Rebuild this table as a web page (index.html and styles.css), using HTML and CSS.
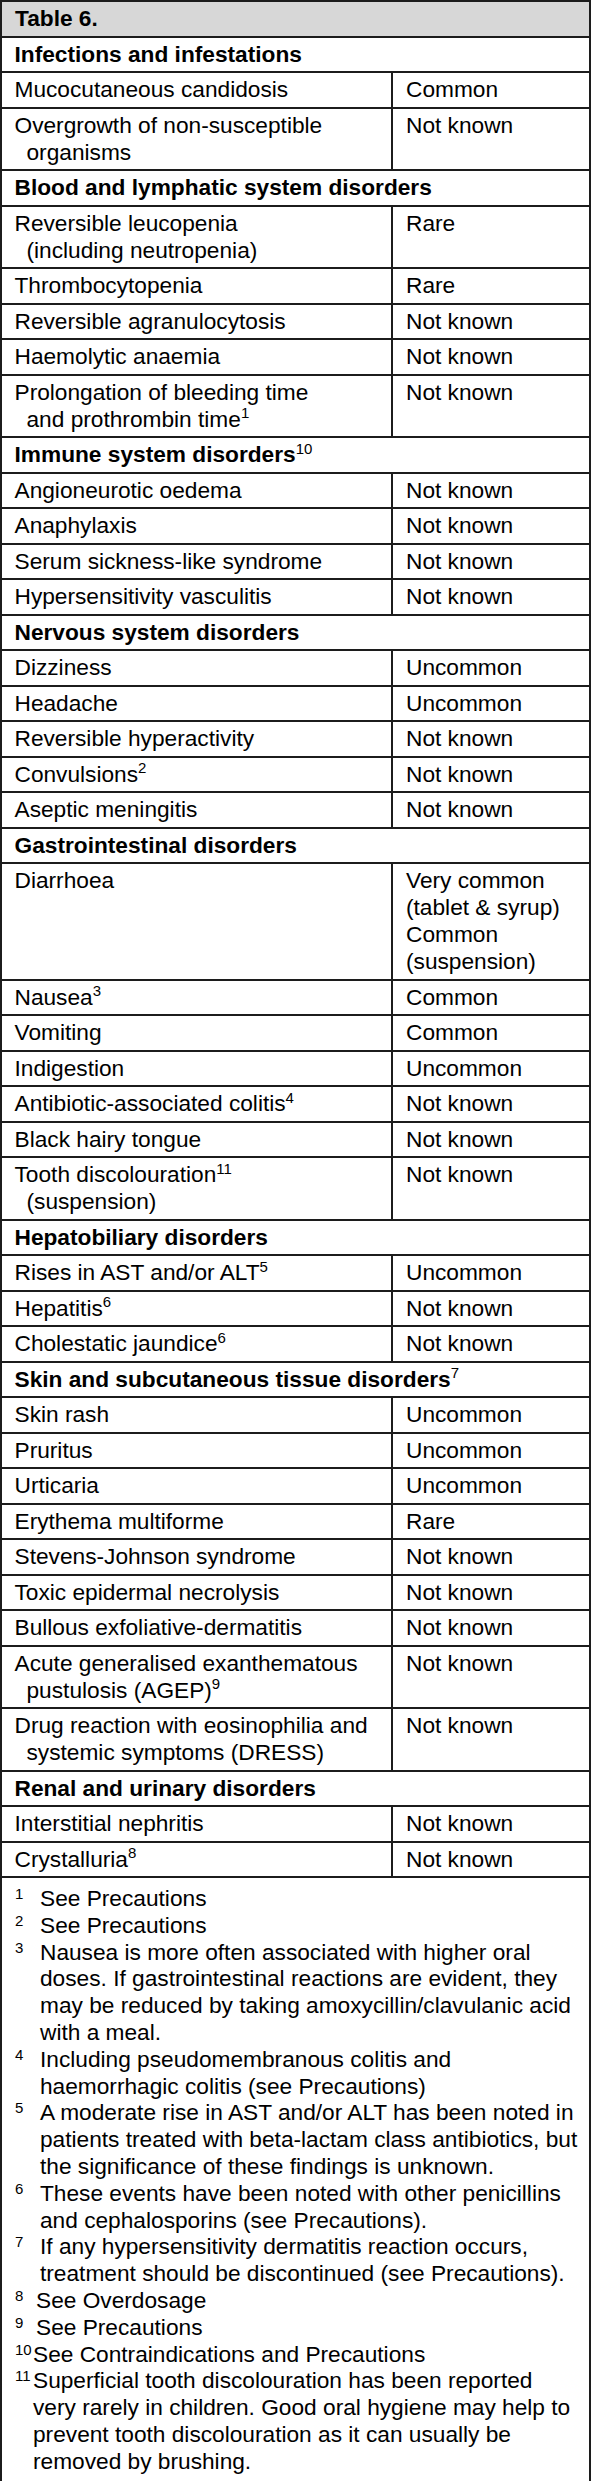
FILE: index.html
```html
<!DOCTYPE html>
<html lang="en">
<head>
<meta charset="utf-8">
<title>Table 6.</title>
<link rel="stylesheet" href="styles.css">
</head>
<body>
<table class="ae">
  <colgroup><col class="c1"><col class="c2"></colgroup>
  <tr class="title"><td colspan="2">Table 6.</td></tr>
  <tr class="sec"><td colspan="2">Infections and infestations</td></tr>
  <tr><td>Mucocutaneous candidosis</td><td>Common</td></tr>
  <tr><td>Overgrowth of non-susceptible<br>organisms</td><td>Not known</td></tr>
  <tr class="sec"><td colspan="2">Blood and lymphatic system disorders</td></tr>
  <tr><td>Reversible leucopenia<br>(including neutropenia)</td><td>Rare</td></tr>
  <tr><td>Thrombocytopenia</td><td>Rare</td></tr>
  <tr><td>Reversible agranulocytosis</td><td>Not known</td></tr>
  <tr><td>Haemolytic anaemia</td><td>Not known</td></tr>
  <tr><td>Prolongation of bleeding time<br>and prothrombin time<sup>1</sup></td><td>Not known</td></tr>
  <tr class="sec"><td colspan="2">Immune system disorders<sup>10</sup></td></tr>
  <tr><td>Angioneurotic oedema</td><td>Not known</td></tr>
  <tr><td>Anaphylaxis</td><td>Not known</td></tr>
  <tr><td>Serum sickness-like syndrome</td><td>Not known</td></tr>
  <tr><td>Hypersensitivity vasculitis</td><td>Not known</td></tr>
  <tr class="sec"><td colspan="2">Nervous system disorders</td></tr>
  <tr><td>Dizziness</td><td>Uncommon</td></tr>
  <tr><td>Headache</td><td>Uncommon</td></tr>
  <tr><td>Reversible hyperactivity</td><td>Not known</td></tr>
  <tr><td>Convulsions<sup>2</sup></td><td>Not known</td></tr>
  <tr><td>Aseptic meningitis</td><td>Not known</td></tr>
  <tr class="sec"><td colspan="2">Gastrointestinal disorders</td></tr>
  <tr><td>Diarrhoea</td><td>Very common<br>(tablet &amp; syrup)<br>Common<br>(suspension)</td></tr>
  <tr><td>Nausea<sup>3</sup></td><td>Common</td></tr>
  <tr><td>Vomiting</td><td>Common</td></tr>
  <tr><td>Indigestion</td><td>Uncommon</td></tr>
  <tr><td>Antibiotic-associated colitis<sup>4</sup></td><td>Not known</td></tr>
  <tr><td>Black hairy tongue</td><td>Not known</td></tr>
  <tr><td>Tooth discolouration<sup>11</sup><br>(suspension)</td><td>Not known</td></tr>
  <tr class="sec"><td colspan="2">Hepatobiliary disorders</td></tr>
  <tr><td>Rises in AST and/or ALT<sup>5</sup></td><td>Uncommon</td></tr>
  <tr><td>Hepatitis<sup>6</sup></td><td>Not known</td></tr>
  <tr><td>Cholestatic jaundice<sup>6</sup></td><td>Not known</td></tr>
  <tr class="sec"><td colspan="2">Skin and subcutaneous tissue disorders<sup>7</sup></td></tr>
  <tr><td>Skin rash</td><td>Uncommon</td></tr>
  <tr><td>Pruritus</td><td>Uncommon</td></tr>
  <tr><td>Urticaria</td><td>Uncommon</td></tr>
  <tr><td>Erythema multiforme</td><td>Rare</td></tr>
  <tr><td>Stevens-Johnson syndrome</td><td>Not known</td></tr>
  <tr><td>Toxic epidermal necrolysis</td><td>Not known</td></tr>
  <tr><td>Bullous exfoliative-dermatitis</td><td>Not known</td></tr>
  <tr><td>Acute generalised exanthematous<br>pustulosis (AGEP)<sup>9</sup></td><td>Not known</td></tr>
  <tr><td>Drug reaction with eosinophilia and<br>systemic symptoms (DRESS)</td><td>Not known</td></tr>
  <tr class="sec"><td colspan="2">Renal and urinary disorders</td></tr>
  <tr><td>Interstitial nephritis</td><td>Not known</td></tr>
  <tr><td>Crystalluria<sup>8</sup></td><td>Not known</td></tr>
  <tr class="notes">
    <td colspan="2">
      <div class="fn fn-a"><span class="n">1</span><span class="t">See Precautions</span></div>
      <div class="fn fn-a"><span class="n">2</span><span class="t">See Precautions</span></div>
      <div class="fn fn-a"><span class="n">3</span><span class="t">Nausea is more often associated with higher oral doses. If gastrointestinal reactions are evident, they may be reduced by taking amoxycillin/clavulanic acid with a meal.</span></div>
      <div class="fn fn-a"><span class="n">4</span><span class="t">Including pseudomembranous colitis and<br>haemorrhagic colitis (see Precautions)</span></div>
      <div class="fn fn-a"><span class="n">5</span><span class="t">A moderate rise in AST and/or ALT has been noted in patients treated with beta-lactam class antibiotics, but the significance of these findings is unknown.</span></div>
      <div class="fn fn-a"><span class="n">6</span><span class="t">These events have been noted with other penicillins and cephalosporins (see Precautions).</span></div>
      <div class="fn fn-a"><span class="n">7</span><span class="t">If any hypersensitivity dermatitis reaction occurs, treatment should be discontinued (see Precautions).</span></div>
      <div class="fn fn-b"><span class="n">8</span><span class="t">See Overdosage</span></div>
      <div class="fn fn-b"><span class="n">9</span><span class="t">See Precautions</span></div>
      <div class="fn fn-c"><span class="n">10</span><span class="t">See Contraindications and Precautions</span></div>
      <div class="fn fn-c"><span class="n">11</span><span class="t">Superficial tooth discolouration has been reported very rarely in children. Good oral hygiene may help to prevent tooth discolouration as it can usually be removed by brushing.</span></div>
    </td>
  </tr>
</table>
</body>
</html>
```
FILE: styles.css
```css
html, body {
  margin: 0;
  padding: 0;
  background: #ffffff;
}

.ae {
  width: 591px;
  table-layout: fixed;
  border-collapse: separate;
  border-spacing: 0;
  border-top: 2px solid #1c1c1c;
  border-left: 2px solid #1c1c1c;
  font-family: "Liberation Sans", Arial, Helvetica, sans-serif;
  font-size: 22.7px;
  line-height: 27px;
  color: #000;
}

.c1 { width: 391px; }
.c2 { width: 198px; }

.ae td {
  border-right: 2px solid #1c1c1c;
  border-bottom: 2px solid #1c1c1c;
  padding: 3px 4px 3.5px 12.5px;
  vertical-align: top;
  white-space: nowrap;
}

.ae td:first-child {
  padding-left: 24.5px;
  text-indent: -12px;
}

.ae td + td {
  padding-left: 13px;
}

.ae .title td {
  background: #d7d7d7;
  font-weight: bold;
  padding-left: 13px;
  text-indent: 0;
}

.ae .sec td {
  font-weight: bold;
  padding-left: 12.5px;
  text-indent: 0;
}

.ae sup {
  font-size: 15px;
  line-height: 0;
  vertical-align: baseline;
  position: relative;
  top: -8.5px;
  font-weight: normal;
}

.ae .notes td {
  padding: 7px 8px 9px 13px;
  text-indent: 0;
  white-space: normal;
  line-height: 26.8px;
}

.fn {
  display: flex;
  align-items: flex-start;
}

.fn .n {
  flex: none;
  font-size: 15px;
  line-height: 18px;
}

.fn-a .n { width: 25px; }
.fn-b .n { width: 21px; }
.fn-c .n { width: 18px; }

.fn .t {
  flex: 1;
  min-width: 0;
}
```
